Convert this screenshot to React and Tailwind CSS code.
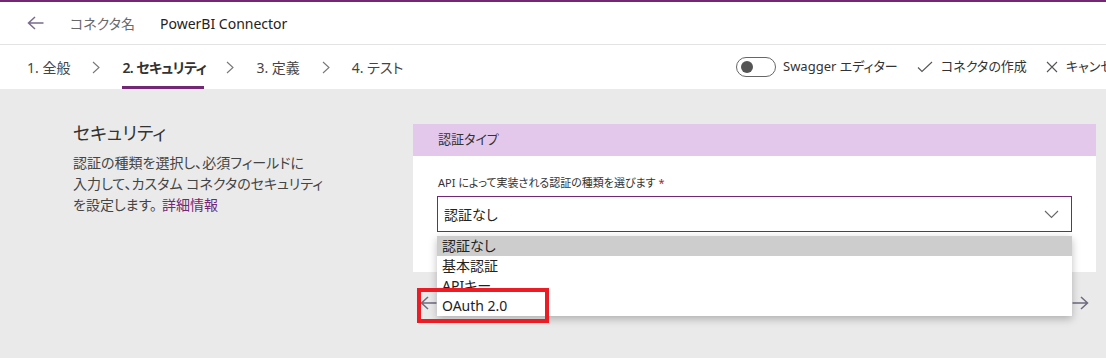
import React from "react";

const Chev = () => (
  <svg width="8" height="13" viewBox="0 0 8 13" className="mx-[22px] shrink-0">
    <path d="M1 1 L7 6.5 L1 12" fill="none" stroke="#777" strokeWidth="1.1" />
  </svg>
);

const Arrow = ({ dir = "left", color = "#7a6b8c" }) => (
  <svg width="17" height="14" viewBox="0 0 17 14" style={{ transform: dir === "right" ? "scaleX(-1)" : undefined }}>
    <path d="M8 1 L1.5 7 L8 13 M1.5 7 H16.5" fill="none" stroke={color} strokeWidth="1.5" />
  </svg>
);

export default function App() {
  return (
    <div
      className="w-[1106px] h-[358px] overflow-hidden bg-[#eaeaea] text-[#333] [font-feature-settings:'palt']"
      style={{ fontFamily: '"Noto Sans", "Noto Sans CJK JP", sans-serif' }}
    >
      {/* header */}
      <div className="h-[45px] bg-white border-t-2 border-[#742774] border-b border-b-[#e3e3e3] flex items-center">
        <div className="pl-[27px] w-[70px]">
          <Arrow />
        </div>
        <span className="text-[14px] text-[#6a6a6a] w-[90px]">コネクタ名</span>
        <span className="text-[14px] text-[#222]">PowerBI Connector</span>
      </div>
      {/* tabs */}
      <div className="h-[44px] bg-white flex items-stretch pl-[27px] text-[14px]">
        <div className="flex items-center whitespace-nowrap">
          <span className="text-[#444]">1. 全般</span>
          <Chev />
          <span className="relative h-full w-[82px] flex items-center font-semibold tracking-[-0.6px] text-[#333]">
            2. セキュリティ
            <span className="absolute left-0 right-0 bottom-0 h-[3px] bg-[#742774]" />
          </span>
          <Chev />
          <span className="text-[#444]">3. 定義</span>
          <Chev />
          <span className="text-[#444]">4. テスト</span>
        </div>
        <div className="ml-auto w-[370px] shrink-0 overflow-hidden flex items-center whitespace-nowrap text-[13px]">
          <div className="w-[40px] h-[20px] shrink-0 rounded-full border border-[#666] flex items-center pl-[4px]">
            <div className="w-[12px] h-[12px] rounded-full bg-[#555]" />
          </div>
          <span className="ml-[7px] w-[107px] shrink-0 text-[#333]">Swagger エディター</span>
          <svg width="16" height="12" viewBox="0 0 16 12" className="ml-[27px] shrink-0">
            <path d="M1 6.5 L5 10.5 L15 1" fill="none" stroke="#555" strokeWidth="1.1" />
          </svg>
          <span className="ml-[8px] w-[81px] shrink-0 text-[#333]">コネクタの作成</span>
          <svg width="12" height="12" viewBox="0 0 12 12" className="ml-[24px] shrink-0">
            <path d="M1 1 L11 11 M11 1 L1 11" fill="none" stroke="#555" strokeWidth="1.1" />
          </svg>
          <span className="ml-[8px] shrink-0 text-[#333]">キャンセル</span>
        </div>
      </div>
      {/* body */}
      <div className="flex pt-[35px] pl-[73px] pr-[10px]">
        <div className="w-[340px] shrink-0">
          <div className="text-[18px] leading-[20px] text-[#333] -mt-[1px]">セキュリティ</div>
          <p className="mt-[9px] text-[14px] leading-[21px] text-[#444]">
            認証の種類を選択し、必須フィールドに
            <br />
            入力して、カスタム コネクタのセキュリティ
            <br />
            を設定します。<span className="ml-[5px] text-[#742774]">詳細情報</span>
          </p>
        </div>
        <div className="flex-1">
          <div className="bg-white">
            <div className="h-[32px] bg-[#e4c8ec] flex items-center pl-[25px] text-[13px] text-[#333]">認証タイプ</div>
            <div className="px-[24px] pt-[19px] pb-[40px]">
              <div className="text-[11px] leading-[16px] text-[#333] pl-[1px]">
                API によって実装される認証の種類を選びます <span className="text-[#a4262c]">*</span>
              </div>
              <div className="relative mt-[5px]">
                <div className="h-[36px] border border-[#742774] flex items-center pl-[6px] pr-[12px] text-[14px] text-[#222]">
                  認証なし
                  <svg width="15" height="9" viewBox="0 0 15 9" className="ml-auto">
                    <path d="M1 1 L7.5 7.5 L14 1" fill="none" stroke="#666" strokeWidth="1.1" />
                  </svg>
                </div>
                <div className="absolute left-0 right-0 top-[40px] z-10 bg-white shadow-[0_3px_8px_rgba(0,0,0,0.25)] text-[14px] text-[#222]">
                  <div className="h-[20px] leading-[20px] pl-[5px] bg-[#cdcdcd]">認証なし</div>
                  <div className="h-[20px] leading-[20px] pl-[5px]">基本認証</div>
                  <div className="h-[20px] leading-[20px] pl-[5px]">APIキー</div>
                  <div className="h-[20px] leading-[20px] pl-[5px]">OAuth 2.0</div>
                  <div className="absolute left-[-20px] top-[52px] w-[132px] h-[35px] border-[4px] border-[#ed1c24]" />
                </div>
              </div>
            </div>
          </div>
          <div className="flex justify-between px-[7px] mt-[24px]">
            <Arrow color="#6e6a80" />
            <Arrow dir="right" color="#6e6a80" />
          </div>
        </div>
      </div>
    </div>
  );
}
